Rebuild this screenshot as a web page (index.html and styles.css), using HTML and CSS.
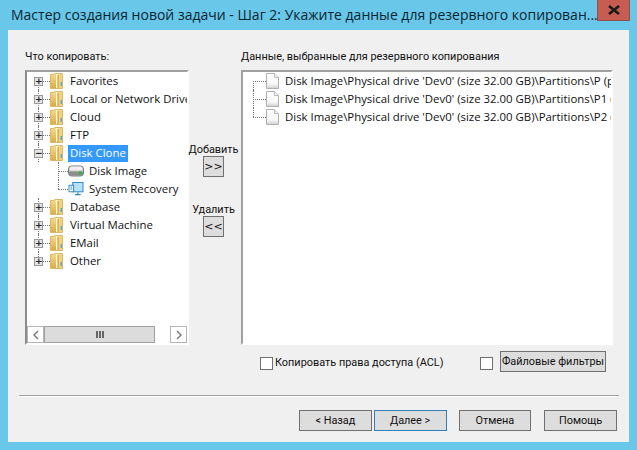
FILE: index.html
```html
<!DOCTYPE html>
<html lang="ru">
<head>
<meta charset="utf-8">
<title>Мастер создания новой задачи</title>
<link rel="stylesheet" href="styles.css">
</head>
<body>
<svg class="defs" width="0" height="0" aria-hidden="true">
  <defs>
    <linearGradient id="fl" x1="0" y1="0" x2="0" y2="1"><stop offset="0" stop-color="#f5dc8e"/><stop offset="1" stop-color="#d9ac48"/></linearGradient>
    <linearGradient id="dg" x1="0" y1="0" x2="0" y2="1"><stop offset="0" stop-color="#ffffff"/><stop offset=".7" stop-color="#f7f7f7"/><stop offset="1" stop-color="#cfcfcf"/></linearGradient>
  </defs>
  <symbol id="folder" viewBox="0 0 13 16">
    <path d="M.5 1.5h3L5 .5h7.5v15H.5z" fill="url(#fl)" stroke="#d8b766"/>
    <path d="M7 1v14" stroke="#fff6d2" stroke-width="2"/>
    <path d="M8 2h4v13H8z" fill="#f2d27a"/>
    <path d="M8 2v13" stroke="#c0933a"/>
    <path d="M10.5 9h1.5v4h-1.5z" fill="#63a6d2"/>
  </symbol>
  <symbol id="doc" viewBox="0 0 13 16">
    <path d="M.5.5h8l4 4v11H.5z" fill="url(#dg)" stroke="#b0b0b0"/>
    <path d="M8.5.5v4h4" fill="#eee" stroke="#bdbdbd"/>
  </symbol>
</svg>
<div class="window">
  <header class="titlebar">
    <h1 class="title">Мастер создания новой задачи - Шаг 2: Укажите данные для резервного копирован...</h1>
    <button class="close" type="button" aria-label="Закрыть">
      <svg width="14" height="10" viewBox="0 0 14 10"><path d="M2 1l10 8M12 1L2 9" stroke="#1a1a1a" stroke-width="2.6" fill="none"/></svg>
    </button>
  </header>
  <main class="client">
    <section class="panes">
      <div class="pane pane-left">
        <div class="pane-label">Что копировать:</div>
        <div class="sunken tree-box">
          <ul class="tree">
            <li class="row"><span class="exp">+</span><span class="dash"></span><svg class="ico"><use href="#folder"/></svg><span class="lbl">Favorites</span></li>
            <li class="row"><span class="exp">+</span><span class="dash"></span><svg class="ico"><use href="#folder"/></svg><span class="lbl">Local or Network Drive</span></li>
            <li class="row"><span class="exp">+</span><span class="dash"></span><svg class="ico"><use href="#folder"/></svg><span class="lbl">Cloud</span></li>
            <li class="row"><span class="exp">+</span><span class="dash"></span><svg class="ico"><use href="#folder"/></svg><span class="lbl">FTP</span></li>
            <li class="row"><span class="exp">−</span><span class="dash"></span><svg class="ico"><use href="#folder"/></svg><span class="lbl selected">Disk Clone</span></li>
            <li class="row child">
              <span class="dash dash-long"></span>
              <svg class="ico ico-child" viewBox="0 0 16 11"><rect x=".5" y=".5" width="15" height="10" rx="3" fill="#c4c4c4" stroke="#777"/><rect x="1.5" y="1" width="13" height="4" rx="2" fill="#f0f0f0"/><rect x="1" y="6" width="14" height="4" rx="1.5" fill="#8c8c8c"/><rect x="11" y="6" width="3" height="3" fill="#35b044"/></svg>
              <span class="lbl">Disk Image</span>
            </li>
            <li class="row child last">
              <span class="dash dash-long"></span>
              <svg class="ico ico-child" viewBox="0 0 16 15"><rect x="4.5" y=".5" width="11" height="10" fill="#b5e2fa" stroke="#2f83bf"/><path d="M10 11v2M7 13.5h6" stroke="#2f83bf" stroke-width="1.2"/><rect x=".5" y="3.5" width="5" height="7" fill="#fff" stroke="#2f83bf"/><path d="M2 5.5h2M2 7.5h2" stroke="#2f83bf"/></svg>
              <span class="lbl">System Recovery</span>
            </li>
            <li class="row"><span class="exp">+</span><span class="dash"></span><svg class="ico"><use href="#folder"/></svg><span class="lbl">Database</span></li>
            <li class="row"><span class="exp">+</span><span class="dash"></span><svg class="ico"><use href="#folder"/></svg><span class="lbl">Virtual Machine</span></li>
            <li class="row"><span class="exp">+</span><span class="dash"></span><svg class="ico"><use href="#folder"/></svg><span class="lbl">EMail</span></li>
            <li class="row end"><span class="exp">+</span><span class="dash"></span><svg class="ico"><use href="#folder"/></svg><span class="lbl">Other</span></li>
          </ul>
          <div class="hscroll">
            <span class="sb-btn"><svg width="8" height="10" viewBox="0 0 8 10"><path d="M6 1L2 5l4 4" stroke="#777" stroke-width="1.4" fill="none"/></svg></span>
            <span class="sb-thumb"><i></i><i></i><i></i></span>
            <span class="sb-track"></span>
            <span class="sb-btn"><svg width="8" height="10" viewBox="0 0 8 10"><path d="M2 1l4 4-4 4" stroke="#777" stroke-width="1.4" fill="none"/></svg></span>
          </div>
        </div>
      </div>
      <div class="mid">
        <div class="mid-group mid-add"><span>Добавить</span><button class="btn btn-sq" type="button">&gt;&gt;</button></div>
        <div class="mid-group mid-del"><span>Удалить</span><button class="btn btn-sq" type="button">&lt;&lt;</button></div>
      </div>
      <div class="pane pane-right">
        <div class="pane-label">Данные, выбранные для резервного копирования</div>
        <div class="sunken list-box">
          <ul class="list">
            <li class="lrow"><span class="ldash"></span><svg class="ldoc"><use href="#doc"/></svg><span class="ltext">Disk Image\Physical drive 'Dev0' (size 32.00 GB)\Partitions\P (p</span></li>
            <li class="lrow"><span class="ldash"></span><svg class="ldoc"><use href="#doc"/></svg><span class="ltext">Disk Image\Physical drive 'Dev0' (size 32.00 GB)\Partitions\P1 (</span></li>
            <li class="lrow"><span class="ldash"></span><svg class="ldoc"><use href="#doc"/></svg><span class="ltext">Disk Image\Physical drive 'Dev0' (size 32.00 GB)\Partitions\P2 (</span></li>
          </ul>
        </div>
      </div>
    </section>
    <section class="options">
      <label class="check"><span class="box"></span>Копировать права доступа (ACL)</label>
      <span class="box box-filter"></span>
      <button class="btn btn-filter" type="button">Файловые фильтры</button>
    </section>
    <hr class="sep">
    <footer class="actions">
      <button class="btn btn-act" type="button">&lt; Назад</button>
      <button class="btn btn-act btn-default" type="button">Далее &gt;</button>
      <button class="btn btn-act btn-cancel" type="button">Отмена</button>
      <button class="btn btn-act btn-help" type="button">Помощь</button>
    </footer>
  </main>
</div>
</body>
</html>
```
FILE: styles.css
```css
* { box-sizing: border-box; }
html, body { margin: 0; padding: 0; }
body { width: 637px; height: 450px; overflow: hidden; font: 11.4px/16px "Open Sans", "Noto Sans", sans-serif; color: #111; }
.defs { position: absolute; }
ul { list-style: none; margin: 0; padding: 0; }
.window { width: 637px; height: 450px; background: #69c8ea; display: flex; flex-direction: column; padding: 0 8px 8px; }
.titlebar { height: 30px; flex: none; display: flex; align-items: flex-start; justify-content: space-between; margin-right: -1px; }
.title { flex: 1; min-width: 0; margin: 0; padding: 5px 0 0 3px; font: 400 14px/20px "Open Sans", "Noto Sans", sans-serif; color: #0c2530; white-space: nowrap; }
.close { flex: none; width: 33px; height: 21px; background: #c75c52; border: 1px solid #8f5048; border-top: 0; padding: 0; display: flex; align-items: center; justify-content: center; }
.client { flex: 1; background: #f0f0f0; display: flex; flex-direction: column; padding: 18px 10px 11px 11px; }
.panes { display: flex; height: 297px; padding-left: 6px; }
.pane { display: flex; flex-direction: column; }
.pane-left { width: 164px; }
.pane-right { width: 372px; }
.pane-label { height: 22px; white-space: nowrap; font: 10.9px/18px Roboto, sans-serif; }
.sunken { flex: 1; background: #fff; border: 2px solid #fff; border-top-color: #a0a0a0; border-left-color: #a0a0a0; min-height: 0; overflow: hidden; display: flex; flex-direction: column; }
.tree-box { border-left-color: #8a8a8a; }
.tree { flex: 1; overflow: hidden; }
.row { height: 18px; display: flex; align-items: center; position: relative; padding-left: 7px; white-space: nowrap; }
.row::before { content: ""; position: absolute; left: 11px; top: 0; bottom: 0; border-left: 1px dotted #777; }
.row:first-child::before { top: 9px; }
.row.end::before { bottom: 9px; }
.exp { width: 9px; height: 9px; border: 1px solid #9a9a9a; background: #e4e4e4; font: 700 9px/7px "DejaVu Sans", sans-serif; text-align: center; color: #222; position: relative; flex: none; }
.dash { width: 7px; border-top: 1px dotted #777; flex: none; }
.ico { width: 13px; height: 16px; flex: none; }
.lbl { margin-left: 5px; padding: 0 2px 2px; line-height: 15px; }
.selected { background: #3399ff; color: #fff; }
.child { padding-left: 31px; }
.child::before { left: 31px; }
.child.last::before { bottom: 9px; }
.dash-long { width: 10px; }
.ico-child { width: 16px; height: 14px; }
.ico-child + .lbl { margin-left: 3px; }
.hscroll { height: 17px; flex: none; display: flex; }
.sb-btn { width: 17px; flex: none; border: 1px solid #b5b5b5; display: flex; align-items: center; justify-content: center; }
.sb-thumb { width: 111px; background: #dcdcdc; border: 1px solid #a0a0a0; display: flex; align-items: center; justify-content: center; gap: 1px; }
.sb-thumb i { width: 2px; height: 7px; background: #666; }
.sb-track { flex: 1; background: #fff; }
.mid { width: 52px; display: flex; flex-direction: column; align-items: center; padding: 93px 3px 0 0; }
.mid-group { display: flex; flex-direction: column; align-items: center; font: 10.9px/18px Roboto, sans-serif; }
.mid-group span { height: 15px; }
.mid-add { margin-bottom: 24px; }
.btn { background: #dddddd; border: 1px solid #707070; color: #111; font: 10.9px/16px Roboto, sans-serif; padding: 0; border-radius: 0; white-space: nowrap; }
.btn-sq { width: 21px; height: 21px; font-family: "DejaVu Sans", sans-serif; font-size: 11px; }
.list { padding: 0; }
.lrow { height: 18px; display: flex; align-items: center; position: relative; padding-left: 10px; white-space: nowrap; overflow: hidden; }
.lrow::before { content: ""; position: absolute; left: 10px; top: 0; bottom: 0; border-left: 1px dotted #777; }
.lrow:first-child::before { top: 9px; }
.lrow:last-child::before { bottom: 9px; }
.ldash { width: 13px; border-top: 1px dotted #777; flex: none; }
.ldoc { width: 13px; height: 16px; flex: none; }
.ltext { margin-left: 6px; }
.options { height: 27px; display: flex; align-items: center; padding-left: 241px; margin-top: 3px; }
.check { display: flex; align-items: center; font: 10.9px/16px Roboto, sans-serif; width: 220px; margin-top: 3px; }
.box { width: 13px; height: 13px; background: #fff; border: 1px solid #707070; flex: none; margin-right: 2px; display: inline-block; }
.box-filter { margin-right: 7px; margin-top: 3px; }
.btn-filter { width: 106px; height: 21px; }
.sep { width: 600px; margin: 20px 0 0; border: 0; border-top: 1px solid #a0a0a0; border-bottom: 1px solid #fff; height: 2px; }
.actions { display: flex; padding-left: 280px; margin-top: 13px; }
.btn-act { width: 73px; height: 21px; margin-right: 2px; }
.btn-default { border-color: #2f7fb8; margin-right: 12px; }
.btn-cancel { margin-right: 13px; }
```
